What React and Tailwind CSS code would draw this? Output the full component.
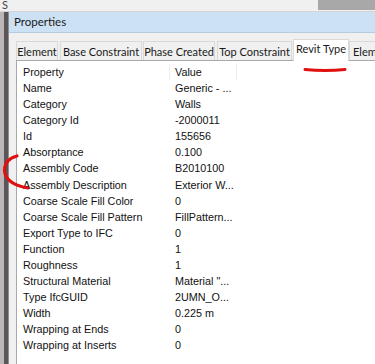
import React from "react";

const rows = [
  ["Name", "Generic - ..."],
  ["Category", "Walls"],
  ["Category Id", "-2000011"],
  ["Id", "155656"],
  ["Absorptance", "0.100"],
  ["Assembly Code", "B2010100"],
  ["Assembly Description", "Exterior W..."],
  ["Coarse Scale Fill Color", "0"],
  ["Coarse Scale Fill Pattern", "FillPattern..."],
  ["Export Type to IFC", "0"],
  ["Function", "1"],
  ["Roughness", "1"],
  ["Structural Material", "Material \"..."],
  ["Type IfcGUID", "2UMN_O..."],
  ["Width", "0.225 m"],
  ["Wrapping at Ends", "0"],
  ["Wrapping at Inserts", "0"],
];

const ui = { fontFamily: 'Lato, "Noto Sans", sans-serif' };

export default function App() {
  return (
    <div className="relative w-[375px] h-[364px] overflow-hidden bg-[#f0f0f0] text-[10.8px]" style={{ fontFamily: '"Liberation Sans", Arial, sans-serif' }}>
      {/* top strip */}
      <div className="flex h-[12px] border-b border-[#d4d4d4]">
        <div className="flex-1 overflow-hidden bg-[#f0f0f0] pl-[2px] text-[11px] leading-[9px] text-[#444]" style={ui}>S</div>
        <div className="mb-[1px] w-[57px] bg-[#a8a8a8]"></div>
      </div>
      <div className="flex h-[352px]">
        {/* left strip */}
        <div className="flex w-[8px]">
          <div className="w-[4px] bg-[#bdb6b8]"></div>
          <div className="w-[4px] bg-[#5a5556]"></div>
        </div>
        <div className="flex flex-1 flex-col border-l border-[#8e8e8e]">
          {/* title bar */}
          <div className="flex h-[21px] items-center border-b border-[#b8cadd] bg-[#cde1f4] pl-[5px] text-[11.5px] text-[#1a1a1a]" style={ui}>
            Properties
          </div>
          <div className="flex flex-1 flex-col bg-[#f0f0f0] pl-[7px] pt-[8px]">
            {/* tabs */}
            <div className="flex h-[19px] items-end text-[11px] text-[#1a1a1a]" style={ui}>
              <div className="mr-[2px] flex h-[19px] w-[42px] items-center justify-center border-x border-t border-[#d9d9d9] leading-none whitespace-nowrap">Element</div>
              <div className="mr-[1px] flex h-[19px] w-[82px] items-center justify-center border-x border-t border-[#d9d9d9] leading-none whitespace-nowrap">Base Constraint</div>
              <div className="mr-[2px] flex h-[19px] w-[72px] items-center justify-center border-x border-t border-[#d9d9d9] leading-none whitespace-nowrap">Phase Created</div>
              <div className="mr-[1px] flex h-[19px] w-[75px] items-center justify-center border-x border-t border-[#d9d9d9] leading-none whitespace-nowrap">Top Constraint</div>
              <div className="z-10 mb-[-1px] flex h-[22px] w-[56px] items-center justify-center border-x border-t border-[#d9d9d9] bg-white pb-[4px] leading-none whitespace-nowrap">Revit Type</div>
              <div className="flex h-[19px] flex-1 items-center overflow-hidden border-l border-t border-[#d9d9d9] pl-[3px] leading-none whitespace-nowrap">Elem</div>
            </div>
            {/* table */}
            <div className="flex-1 border-l border-t border-[#a9a9a9] bg-white pt-[3px] text-[#111]">
              <div className="flex h-[16px] items-center">
                <div className="flex h-[16px] w-[153px] items-center border-r border-[#ededed] pl-[6px]">Property</div>
                <div className="flex h-[16px] w-[67px] items-center border-r border-[#ededed] pl-[5px]">Value</div>
              </div>
              {rows.map(([k, v]) => (
                <div key={k} className="flex h-[16.1px] items-center whitespace-nowrap">
                  <div className="w-[153px] pl-[6px]">{k}</div>
                  <div className="pl-[5px]">{v}</div>
                </div>
              ))}
            </div>
          </div>
        </div>
      </div>
      {/* red annotations */}
      <svg className="pointer-events-none absolute left-0 top-0" width="375" height="364">
        <path d="M305 69.5 Q325 71.5 345 69.5" stroke="#e01010" strokeWidth="3" fill="none" strokeLinecap="round" />
        <path d="M17 156 Q5 159 4.5 170 Q5 184 28 188" stroke="#e01010" strokeWidth="3.2" fill="none" strokeLinecap="round" />
      </svg>
    </div>
  );
}
